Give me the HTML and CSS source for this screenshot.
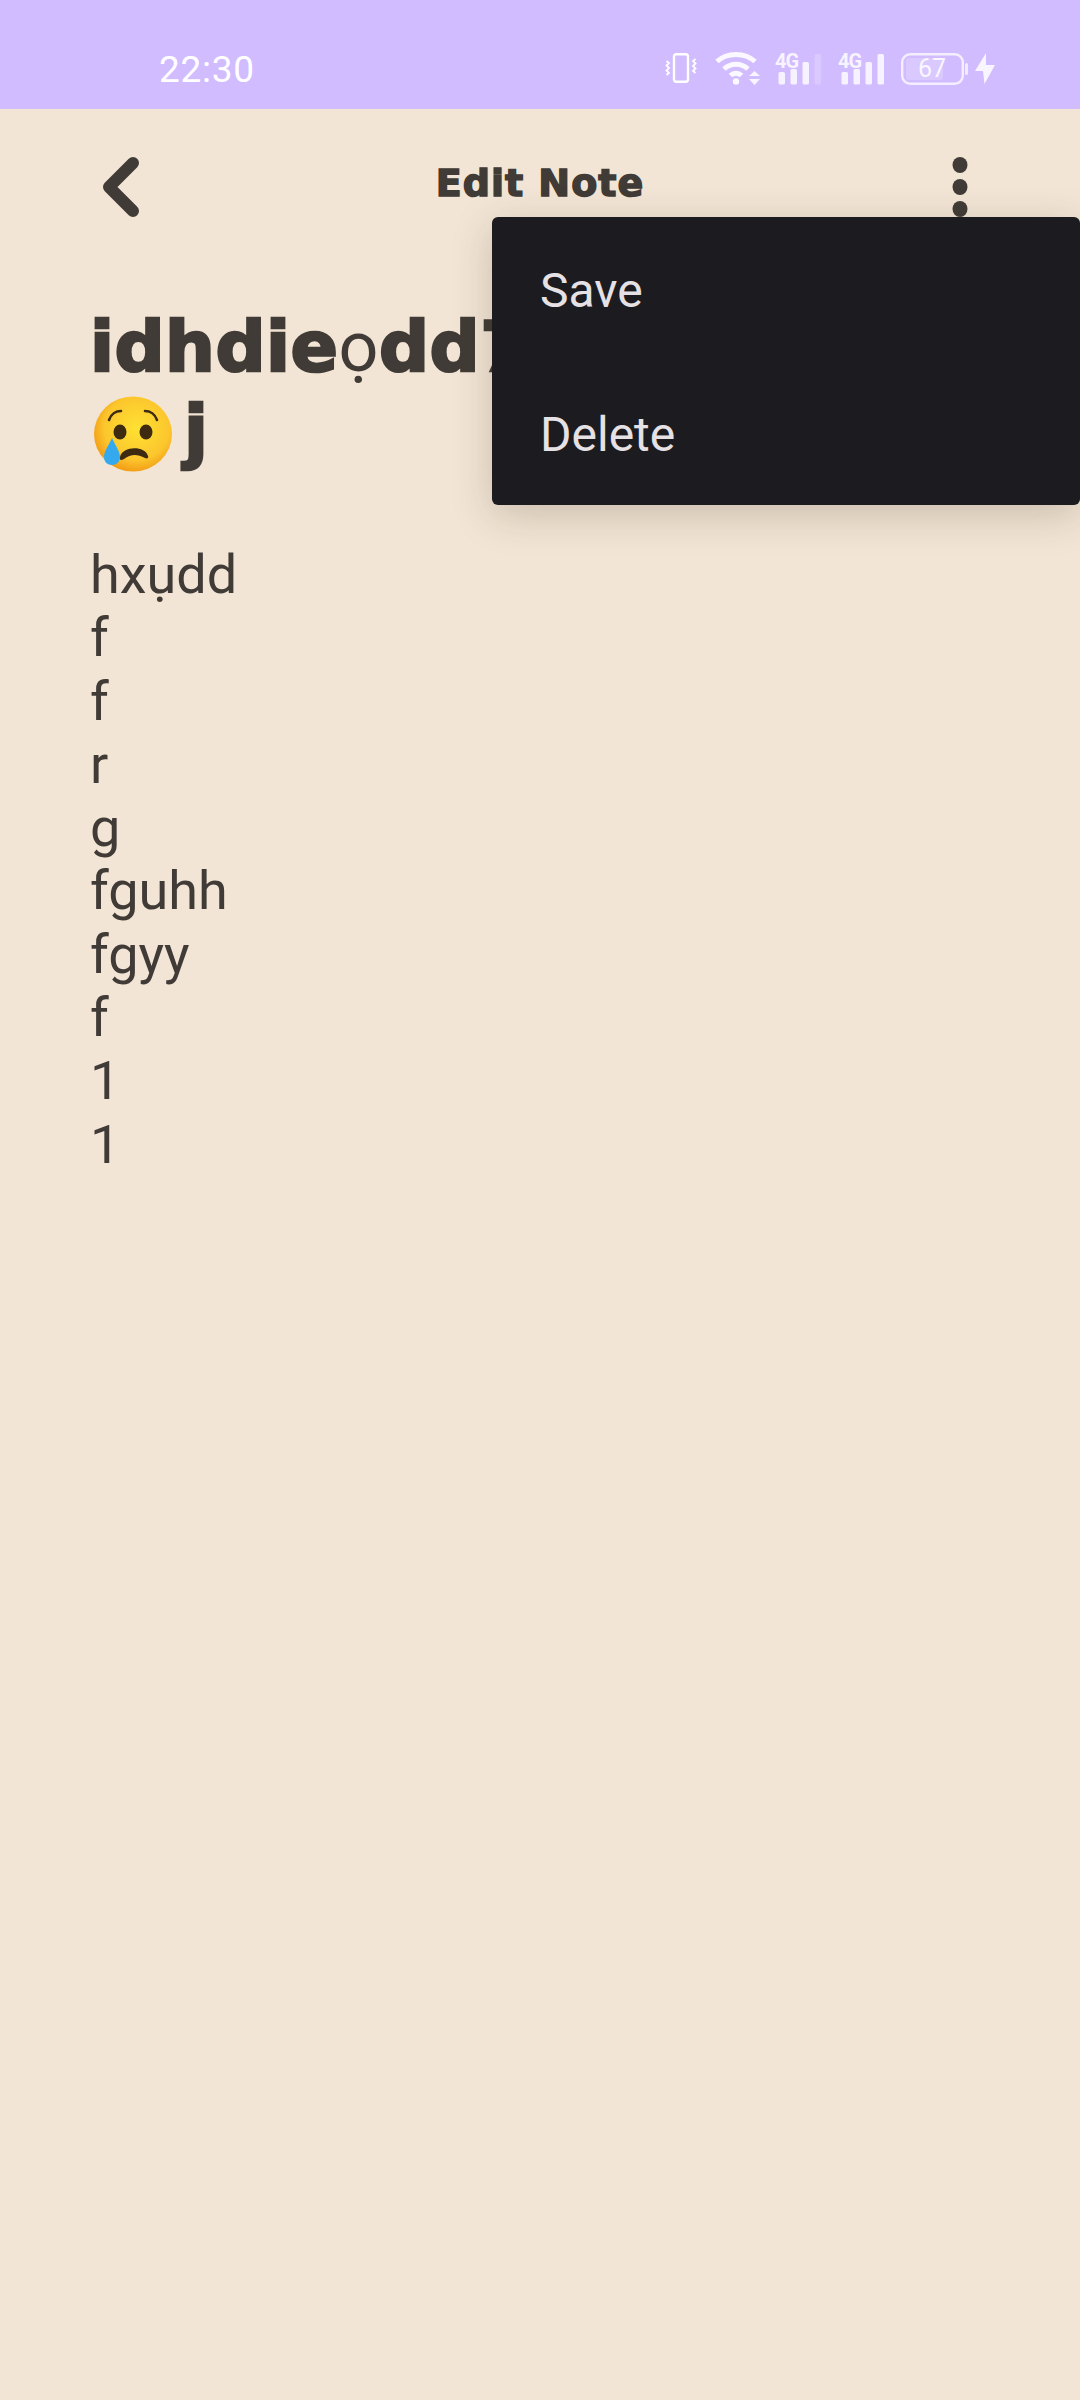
FILE: index.html
```html
<!DOCTYPE html>
<html lang="en">
<head>
<meta charset="utf-8">
<title>Edit Note</title>
<link rel="stylesheet" href="styles.css">
</head>
<body>
<div class="screen">
  <header class="status">
    <span class="clock">22:30</span>
    <div class="status-icons">
      <svg class="ic-vib" width="32" height="30" viewBox="0 0 32 30">
        <rect x="9" y="1.2" width="14" height="27.6" rx="2.5" fill="none" stroke="#fff" stroke-width="2.4"/>
        <path d="M1.500 8l2.500 2-2.500 2.500 2.500 2.500-2.500 2.500 2.500 2.500-2.500 2M30.500 6l-2.500 2 2.500 2.500-2.500 2.500 2.500 2.500-2.500 2.500 2.500 2" fill="none" stroke="#fff" stroke-width="1.8"/>
      </svg>
      <svg class="ic-wifi" width="46" height="34" viewBox="0 0 46 34">
        <g fill="none" stroke="#fff" stroke-opacity=".9" stroke-width="5">
          <path d="M2 10.5C12 1 30 1 40 10.5"/>
          <path d="M9 18C16 11.500 26 11.500 33 18"/>
          <path d="M15.500 24.500C18.500 21.500 23.500 21.500 26.500 24.500"/>
        </g>
        <circle cx="21" cy="30.500" r="3.200" fill="#fff" fill-opacity=".9"/>
        <path d="M34 25l5.500-5 5.500 5zM34 28h11l-5.500 6z" fill="#fff" fill-opacity=".85"/>
      </svg>
      <svg class="ic-sig" width="46" height="36" viewBox="0 0 46 36">
        <text x="0" y="18" class="sig-label">4G</text>
        <rect x="3.500" y="22" width="6.500" height="12.500" rx="1.500" fill="#fff" fill-opacity=".8"/>
        <rect x="15.500" y="19" width="6.500" height="15.500" rx="1.500" fill="#fff" fill-opacity=".8"/>
        <rect x="27.500" y="12" width="6.500" height="22.500" rx="1.500" fill="#fff" fill-opacity=".8"/>
        <rect x="39.500" y="4" width="6.500" height="30.500" rx="1.500" fill="#fff" fill-opacity=".2"/>
      </svg>
      <svg class="ic-sig" width="46" height="36" viewBox="0 0 46 36">
        <text x="0" y="18" class="sig-label">4G</text>
        <rect x="3.500" y="22" width="6.500" height="12.500" rx="1.500" fill="#fff" fill-opacity=".8"/>
        <rect x="15.500" y="19" width="6.500" height="15.500" rx="1.500" fill="#fff" fill-opacity=".8"/>
        <rect x="27.500" y="12" width="6.500" height="22.500" rx="1.500" fill="#fff" fill-opacity=".8"/>
        <rect x="39.500" y="4" width="6.500" height="30.500" rx="1.500" fill="#fff" fill-opacity=".8"/>
      </svg>
      <svg class="ic-bat" width="67" height="32" viewBox="0 0 67 32">
        <rect x="1.200" y="1.200" width="60.600" height="29.600" rx="8" fill="none" stroke="#fff" stroke-opacity=".75" stroke-width="2.400"/>
        <rect x="5" y="5" width="37" height="22" rx="3" fill="#fff" fill-opacity=".2"/>
        <rect x="64" y="10" width="3" height="12" rx="1.500" fill="#fff" fill-opacity=".7"/>
        <text x="31" y="24" class="bat-label">67</text>
      </svg>
      <svg class="ic-bolt" width="20" height="31" viewBox="0 0 20 31">
        <path d="M11 0L0 18h8L9.500 31 20 12h-9z" fill="#fff" fill-opacity=".85"/>
      </svg>
    </div>
  </header>

  <nav class="topbar">
    <svg class="back" width="37" height="60" viewBox="0 0 37 60">
      <path d="M31 6L7 30l24 24" fill="none" stroke="#403b36" stroke-width="12" stroke-linecap="round" stroke-linejoin="round"/>
    </svg>
    <span class="heading">Edit Note</span>
    <svg class="dots" width="16" height="60" viewBox="0 0 16 60">
      <ellipse cx="8" cy="8" rx="7.500" ry="8" fill="#403b36"/>
      <ellipse cx="8" cy="30" rx="7.500" ry="8" fill="#403b36"/>
      <ellipse cx="8" cy="52" rx="7.500" ry="8" fill="#403b36"/>
    </svg>
  </nav>

  <main class="note">
    <h1 class="note-title">
      <span class="title-line">idhdie<span class="title-fallback">ọ</span>dd7</span>
      <span class="title-line"><svg class="emoji" width="82" height="78" viewBox="0 0 82 78">
        <defs>
          <radialGradient id="face" cx=".55" cy=".42" r=".6">
            <stop offset="0" stop-color="#fee133"/>
            <stop offset=".7" stop-color="#fcc62d"/>
            <stop offset="1" stop-color="#f19a14"/>
          </radialGradient>
        </defs>
        <ellipse cx="41" cy="39" rx="39" ry="37.500" fill="url(#face)"/>
        <ellipse cx="28" cy="37" rx="6.500" ry="7.500" fill="#3e2a10"/>
        <ellipse cx="54" cy="37" rx="6.500" ry="7.500" fill="#3e2a10"/>
        <path d="M17 25c2-6 7-9 12-9M65 25c-2-6-7-9-12-9" fill="none" stroke="#3e2a10" stroke-width="2.600" stroke-linecap="round"/>
        <path d="M28 62c2-11 25-12 28-1 1 2-1 3-3 2-8-4-14-4-21 1-3 2-5 1-4-2z" fill="#3e2a10"/>
        <path d="M20 43c3 7 8 13 8 19 0 5-3.500 8-8 8s-8-3-8-8c0-6 5-12 8-19z" fill="#35a9ee"/>
      </svg><span class="title-tail">j</span></span>
    </h1>
    <p class="note-body">hxụdd<br>f<br>f<br>r<br>g<br>fguhh<br>fgyy<br>f<br>1<br>1</p>
  </main>

  <div class="menu">
    <div class="menu-item">Save</div>
    <div class="menu-item">Delete</div>
  </div>
</div>
</body>
</html>
```

FILE: styles.css
```css
* { box-sizing: border-box; }
html, body { margin: 0; padding: 0; }
body { background: #f2e5d5; color: #403b36; font-family: "Roboto", "Liberation Sans", sans-serif; }
.screen { position: relative; width: 1080px; height: 2400px; overflow: hidden; background: #f2e5d5; }

.status { display: flex; height: 109px; padding: 50px 85px 0 159px; justify-content: space-between; align-items: flex-start; background: #d1bcff; }
.clock { font-family: "Roboto", sans-serif; font-size: 37px; font-weight: 400; line-height: 40px; color: #fff; letter-spacing: .7px; }
.status-icons { display: flex; align-items: flex-start; }
.status-icons svg { overflow: visible; }
.ic-vib { margin-top: 3px; }
.ic-wifi { margin-left: 18px; margin-top: 1px; }
.ic-sig { margin-left: 14px; }
.ic-sig + .ic-sig { margin-left: 17px; }
.ic-bat { margin-left: 17px; margin-top: 3px; }
.ic-bolt { margin-left: 7px; margin-top: 3px; }
.sig-label { font-family: "Roboto", sans-serif; font-size: 20px; font-weight: 700; fill: #fff; fill-opacity: .85; letter-spacing: -1px; }
.bat-label { font-family: "Roboto", sans-serif; font-size: 25px; fill: #fff; fill-opacity: .85; text-anchor: middle; }

.topbar { display: grid; grid-template-columns: 1fr auto 1fr; align-items: center; height: 60px; margin-top: 48px; padding: 0 102px 0 102px; }
.back { justify-self: start; }
.dots { justify-self: end; margin-right: 10px; }
.heading { font-family: "DejaVu Sans", sans-serif; font-weight: 700; font-size: 38px; line-height: 50px; margin-top: -8px; -webkit-text-stroke: 1.500px #403b36; letter-spacing: 1px; }

.note { padding: 0 90px; margin-top: 88px; }
.note-title { margin: 0; font-family: "DejaVu Sans", sans-serif; font-weight: 700; font-size: 70px; line-height: 84px; -webkit-text-stroke: 2.500px #403b36; letter-spacing: .5px; white-space: nowrap; }
.title-line { display: block; height: 84px; }
.title-fallback { font-family: "Roboto", sans-serif; font-weight: 400; -webkit-text-stroke: 0; }
.emoji { vertical-align: -18px; margin-left: 2px; }
.title-tail { margin-left: 10px; }
.note-body { margin: 70px 0 0; font-size: 54px; line-height: 63.300px; }

.menu { position: absolute; top: 217px; left: 492px; width: 588px; height: 288px; border-radius: 6px; background: #1c1b1f; box-shadow: 0 10px 40px rgba(70, 50, 30, .22); }
.menu-item { height: 144px; padding: 2px 48px 0; font-size: 48px; line-height: 144px; color: #e6e1e5; }
```
